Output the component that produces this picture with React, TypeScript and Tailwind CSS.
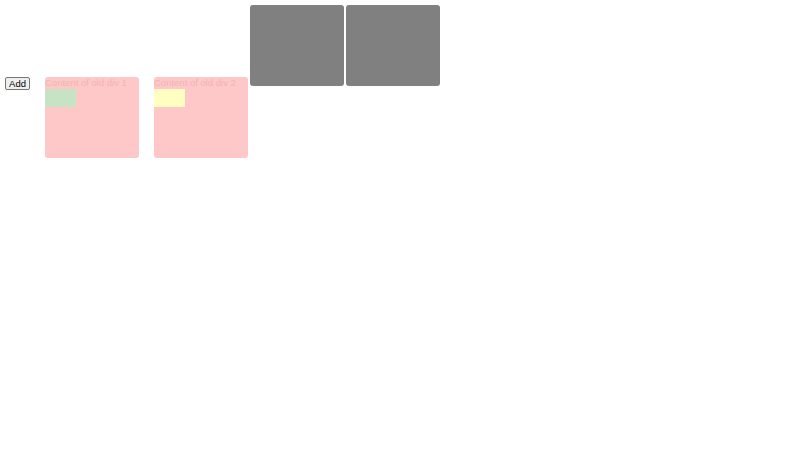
export default function App() {
  const oldDivs = [
    { label: "Content of old div 1", chip: "bg-[#c6e3c6]" },
    { label: "Content of old div 2", chip: "bg-[#ffffc2]" },
  ];

  return (
    <div className="flex items-start pt-[5px] font-['Liberation_Sans',Arial,sans-serif]">
      <button className="ml-[5px] mt-[72px] w-[25px] h-[13px] p-0 border border-[#767676] rounded-[2px] bg-[#efefef] text-[9.5px] leading-[11px] text-black">
        Add
      </button>
      {oldDivs.map((d) => (
        <div
          key={d.label}
          className="ml-[15px] mt-[72px] w-[94px] h-[81px] rounded-[3px] bg-[#ffc8c8] flex flex-col"
        >
          <div className="text-[9.5px] leading-[12px] text-[#f0b4b4] whitespace-nowrap overflow-hidden">
            {d.label}
          </div>
          <div className={`w-[31px] h-[18px] ${d.chip}`} />
        </div>
      ))}
      <div className="ml-[2px] w-[94px] h-[81px] rounded-[3px] bg-[#808080]" />
      <div className="ml-[2px] w-[94px] h-[81px] rounded-[3px] bg-[#808080]" />
    </div>
  );
}
